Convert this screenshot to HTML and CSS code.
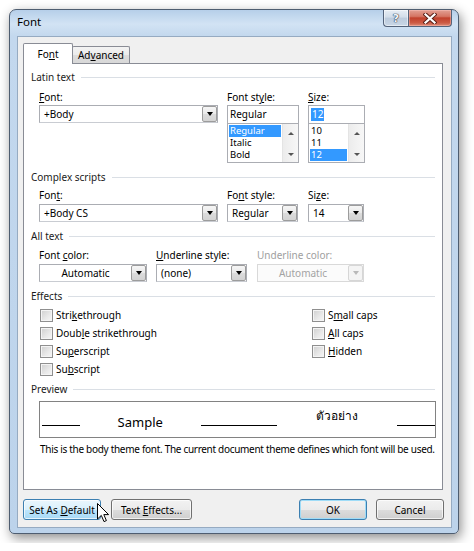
FILE: index.html
```html
<!DOCTYPE html>
<html lang="en">
<head>
<meta charset="utf-8">
<title>Font</title>
<link rel="stylesheet" href="styles.css">
</head>
<body>
<div class="window">
  <div class="titlebar">
    <span class="title">Font</span>
    <div class="caption-btns">
      <div class="cbtn help"><span>?</span></div>
      <div class="cbtn close">
        <svg width="14" height="11" viewBox="0 0 14 11"><path d="M2.5 1.5 L11.5 9.5 M11.5 1.5 L2.5 9.5" stroke="#5a2018" stroke-width="4.2" stroke-linecap="square" fill="none"/><path d="M2.5 1.5 L11.5 9.5 M11.5 1.5 L2.5 9.5" stroke="#fff" stroke-width="2.2" stroke-linecap="square" fill="none"/></svg>
      </div>
    </div>
  </div>
  <div class="client">
    <div class="tabs">
      <div class="tab active"><span>Fo<u>n</u>t</span></div>
      <div class="tab inactive"><span>Ad<u>v</u>anced</span></div>
    </div>
    <div class="panel">
      <div class="ghead"><span>Latin text</span></div>
      <div class="row latin">
        <div class="field w-font">
          <label><u>F</u>ont:</label>
          <div class="combo"><span class="ctext">+Body</span><span class="dd"></span></div>
        </div>
        <div class="field w-style">
          <label>Font st<u>y</u>le:</label>
          <div class="textbox">Regular</div>
          <div class="listbox">
            <ul><li class="sel">Regular</li><li>Italic</li><li>Bold</li></ul>
            <div class="vscroll"><span class="up"></span><span class="down"></span></div>
          </div>
        </div>
        <div class="field w-size">
          <label><u>S</u>ize:</label>
          <div class="textbox"><span class="hl">12</span></div>
          <div class="listbox">
            <ul><li>10</li><li>11</li><li class="sel">12</li></ul>
            <div class="vscroll"><span class="up"></span><span class="down"></span></div>
          </div>
        </div>
      </div>

      <div class="ghead g2"><span>Complex scripts</span></div>
      <div class="row complex">
        <div class="field w-font">
          <label>Fon<u>t</u>:</label>
          <div class="combo"><span class="ctext">+Body CS</span><span class="dd"></span></div>
        </div>
        <div class="field w-style2">
          <label>Fo<u>n</u>t style:</label>
          <div class="combo"><span class="ctext">Regular</span><span class="dd"></span></div>
        </div>
        <div class="field w-size2">
          <label>Si<u>z</u>e:</label>
          <div class="combo"><span class="ctext">14</span><span class="dd"></span></div>
        </div>
      </div>

      <div class="ghead g2"><span>All text</span></div>
      <div class="row alltext">
        <div class="field w-color">
          <label>Font <u>c</u>olor:</label>
          <div class="combo"><span class="ctext center">Automatic</span><span class="dd"></span></div>
        </div>
        <div class="field w-ustyle">
          <label><u>U</u>nderline style:</label>
          <div class="combo"><span class="ctext">(none)</span><span class="dd"></span></div>
        </div>
        <div class="field w-ucolor disabled">
          <label>Underline color:</label>
          <div class="combo"><span class="ctext center">Automatic</span><span class="dd"></span></div>
        </div>
      </div>

      <div class="ghead g2"><span>Effects</span></div>
      <div class="effects">
        <div class="ecol left">
          <div class="check"><span class="box"></span><span>Stri<u>k</u>ethrough</span></div>
          <div class="check"><span class="box"></span><span>Doub<u>l</u>e strikethrough</span></div>
          <div class="check"><span class="box"></span><span>Su<u>p</u>erscript</span></div>
          <div class="check"><span class="box"></span><span>Su<u>b</u>script</span></div>
        </div>
        <div class="ecol right">
          <div class="check"><span class="box"></span><span>S<u>m</u>all caps</span></div>
          <div class="check"><span class="box"></span><span><u>A</u>ll caps</span></div>
          <div class="check"><span class="box"></span><span><u>H</u>idden</span></div>
        </div>
      </div>

      <div class="ghead g3"><span>Preview</span></div>
      <div class="preview">
        <div class="half">
          <span class="seg"></span>
          <span class="sample">Sample</span>
          <span class="seg"></span>
        </div>
        <div class="half">
          <span class="seg"></span>
          <span class="thai" lang="th">ตัวอย่าง</span>
          <span class="seg"></span>
        </div>
      </div>
      <p class="desc">This is the body theme font. The current document theme defines which font will be used.</p>
    </div>

    <div class="buttons">
      <div class="btn hover w-def"><span>Set As <u>D</u>efault</span></div>
      <div class="btn w-fx"><span>Text <u>E</u>ffects...</span></div>
      <div class="spacer"></div>
      <div class="btn default w-ok"><span>OK</span></div>
      <div class="btn w-cancel"><span>Cancel</span></div>
    </div>
  </div>
</div>
<svg class="cursor" width="13" height="20" viewBox="0 0 13 20"><path d="M0.5 0.5 L0.5 16 L4.3 12.4 L7 18.6 L9.4 17.6 L6.8 11.6 L11.6 11.6 Z" fill="#fff" stroke="#000" stroke-width="1" stroke-linejoin="miter"/></svg>
</body>
</html>
```

FILE: styles.css
```css
* { box-sizing: border-box; }
html, body { margin: 0; padding: 0; background: #fff; }
body {
  padding: 9px;
  font-family: "Noto Sans", "Open Sans", sans-serif;
  font-size: 10px;
  color: #000;
}
u { text-decoration: underline; text-underline-offset: 1px; }

.window {
  width: 450px;
  border: 1px solid #4e5d70;
  border-radius: 7px 7px 5px 5px;
  background: linear-gradient(180deg, #b6cfe9 0px, #d2e3f4 14px, #c3d8ee 26px, #bcd3eb 100%);
  box-shadow: 2px 4px 12px rgba(0, 0, 0, 0.45);
}
.titlebar {
  height: 26px;
  display: flex;
  justify-content: space-between;
  align-items: flex-start;
  padding-left: 7px;
}
.title { font-size: 11.5px; line-height: 14px; margin-top: 5px; }
.caption-btns { display: flex; margin-right: 6px; }
.cbtn {
  height: 17px;
  display: flex;
  align-items: center;
  justify-content: center;
  border: 1px solid #54637a;
  border-top: none;
}
.help {
  width: 25px;
  border-right: none;
  border-radius: 0 0 0 4px;
  background: linear-gradient(180deg, #e7edf4 0%, #d2dde9 45%, #bccbdc 50%, #c9d7e6 100%);
  box-shadow: inset 0 0 0 1px rgba(255,255,255,.5);
}
.help span {
  font-family: "DejaVu Sans", sans-serif;
  font-weight: bold;
  font-size: 11px;
  line-height: 11px;
  color: #f4f6f9;
  text-shadow: 0 0 1px #2c3a4c, 0 0 1px #2c3a4c, 0 0 1px #2c3a4c;
}
.close {
  width: 44px;
  border-radius: 0 0 4px 0;
  background: linear-gradient(180deg, #e2a094 0%, #d57563 40%, #c1412c 50%, #cc5b45 80%, #dc8c78 100%);
  box-shadow: inset 0 0 0 1px rgba(255,200,190,.45);
}

.client {
  margin: 0 6px 5px 7px;
  border: 1px solid #96abc2;
  background: #f0f0f0;
  padding: 6px 7px 7px 5px;
}

.tabs { display: flex; align-items: flex-end; height: 20px; position: relative; z-index: 2; }
.tab { border: 1px solid #898c95; border-bottom: none; text-align: center; }
.tab.active {
  width: 50px; height: 21px; margin-bottom: -1px;
  background: #fff; border-radius: 2px 2px 0 0;
  line-height: 20px; position: relative; z-index: 2;
}
.tab.inactive {
  width: 58px; height: 17px; margin-left: -1px;
  background: linear-gradient(180deg, #f3f3f3 0%, #ebebeb 50%, #dddddd 51%, #d8d8d8 100%);
  line-height: 17px; border-radius: 2px 2px 0 0;
}

.panel {
  position: relative; z-index: 1;
  width: 420px; height: 427px;
  border: 1px solid #898c95;
  background: #fff;
  padding: 6px 7px 0 7px;
}
.ghead { display: flex; align-items: center; height: 14px; line-height: 14px; color: #1b1b1b; }
.ghead::after { content: ""; flex: 1; border-top: 1px solid #dadfe5; margin-left: 6px; }
.g2 { margin-top: 7px; }
.g3 { margin-top: 4px; }

.row { display: flex; margin-left: 8px; }
.latin { margin-top: 6px; height: 73px; }
.complex { margin-top: 4px; }
.alltext { margin-top: 5px; }
.field label { display: block; height: 14px; line-height: 14px; margin-bottom: 2px; }
.latin .field label { margin-bottom: 1px; }
.field.disabled label { color: #a0a0a0; }

.w-font { width: 179px; margin-right: 9px; }
.w-style { width: 72px; margin-right: 9px; }
.w-size { width: 57px; }
.w-style2 { width: 71px; margin-right: 10px; }
.w-size2 { width: 56px; }
.w-color { width: 108px; margin-right: 9px; }
.w-ustyle { width: 91px; margin-right: 10px; }
.w-ucolor { width: 107px; }

.combo {
  height: 18px;
  display: flex;
  align-items: center;
  border: 1px solid #abadb3;
  border-bottom-color: #c9ccd2;
  background: #fff;
}
.ctext { flex: 1; padding-left: 4px; line-height: 16px; white-space: nowrap; }
.ctext.center { text-align: center; padding-left: 0; }
.dd {
  width: 15px; height: 16px;
  border: 1px solid #9c9c9c;
  border-radius: 2px;
  background: linear-gradient(180deg, #f6f6f6 0%, #e9e9e9 50%, #dcdcdc 51%, #d3d3d3 100%);
  display: flex; align-items: center; justify-content: center;
}
.dd::after {
  content: "";
  border-left: 3.5px solid transparent;
  border-right: 3.5px solid transparent;
  border-top: 4px solid #000;
}
.disabled .combo { border-color: #d9d9d9; background: #fbfbfb; }
.disabled .ctext { color: #a3a3a3; }
.disabled .dd { border-color: #d6d6d6; background: #f4f4f4; }
.disabled .dd::after { border-top-color: #b9b9b9; }

.textbox {
  height: 18px;
  border: 1px solid #abadb3;
  border-bottom: none;
  background: #fff;
  padding: 1px 2px;
  line-height: 15px;
}
.textbox .hl { background: #3399ff; color: #fff; padding: 0 1px; display: inline-block; line-height: 13px; }
.listbox {
  height: 40px;
  display: flex;
  border: 1px solid #abadb3;
  background: #fff;
}
.listbox ul { flex: 1; list-style: none; margin: 0; padding: 1px 1px 0 1px; font-size: 9.5px; }
.listbox li { height: 12px; line-height: 12px; padding-left: 1px; overflow: hidden; }
.listbox li.sel { background: #3399ff; color: #fff; }
.vscroll {
  width: 16px;
  display: flex; flex-direction: column; justify-content: space-between; align-items: center;
  padding: 8px 0 6px;
  background: linear-gradient(90deg, #ececec, #f7f7f7);
  border-left: 1px solid #e4e4e4;
}
.vscroll .up { border-left: 3px solid transparent; border-right: 3px solid transparent; border-bottom: 3px solid #555; }
.vscroll .down { border-left: 3px solid transparent; border-right: 3px solid transparent; border-top: 3px solid #555; }

.effects { display: flex; margin-left: 8px; margin-top: 3px; height: 72px; }
.ecol.left { width: 272px; }
.check { display: flex; align-items: center; height: 18px; }
.box {
  width: 13px; height: 13px;
  margin-left: 1px; margin-right: 3px;
  border: 1px solid #8f8f8f;
  background: linear-gradient(135deg, #cfcfcf 0%, #e9e9e9 60%, #f6f6f6 100%);
  box-shadow: inset 0 0 0 1px #f4f4f4;
}

.preview {
  margin: 5px 0 0 8px;
  width: 397px; height: 37px;
  border: 1px solid #828282;
  background: #fff;
  padding: 0 0 0 2px;
  display: flex;
}
.half { flex: 1; display: flex; justify-content: space-between; align-items: flex-start; }
.seg { width: 38px; height: 24px; border-bottom: 1px solid #000; }
.sample { font-size: 13px; line-height: 16px; margin-top: 12px; }
.thai { font-size: 12px; line-height: 16px; margin-top: 6px; }
.desc { margin: 4px 0 0 9px; height: 14px; line-height: 14px; white-space: nowrap; letter-spacing: -0.3px; }

.buttons { display: flex; margin-top: 9px; }
.spacer { flex: 1; }
.btn {
  height: 21px;
  border: 1px solid #707070;
  border-radius: 3px;
  background: linear-gradient(180deg, #f2f2f2 0%, #ebebeb 50%, #dddddd 51%, #cfcfcf 100%);
  box-shadow: inset 0 0 0 1px rgba(255,255,255,.7);
  display: flex; align-items: center; justify-content: center;
  white-space: nowrap;
}
.btn.hover {
  border-color: #3c7fb1;
  background: linear-gradient(180deg, #eaf6fd 0%, #d9f0fc 50%, #bee6fd 51%, #a7d9f5 100%);
}
.btn.default {
  border-color: #3c7fb1;
  box-shadow: inset 0 0 0 1px #9fdcf7;
}
.w-def { width: 78px; margin-right: 10px; }
.w-fx { width: 81px; }
.w-ok { width: 68px; margin-right: 9px; }
.w-cancel { width: 68px; }

.cursor { position: absolute; left: 97px; top: 503px; }
```
